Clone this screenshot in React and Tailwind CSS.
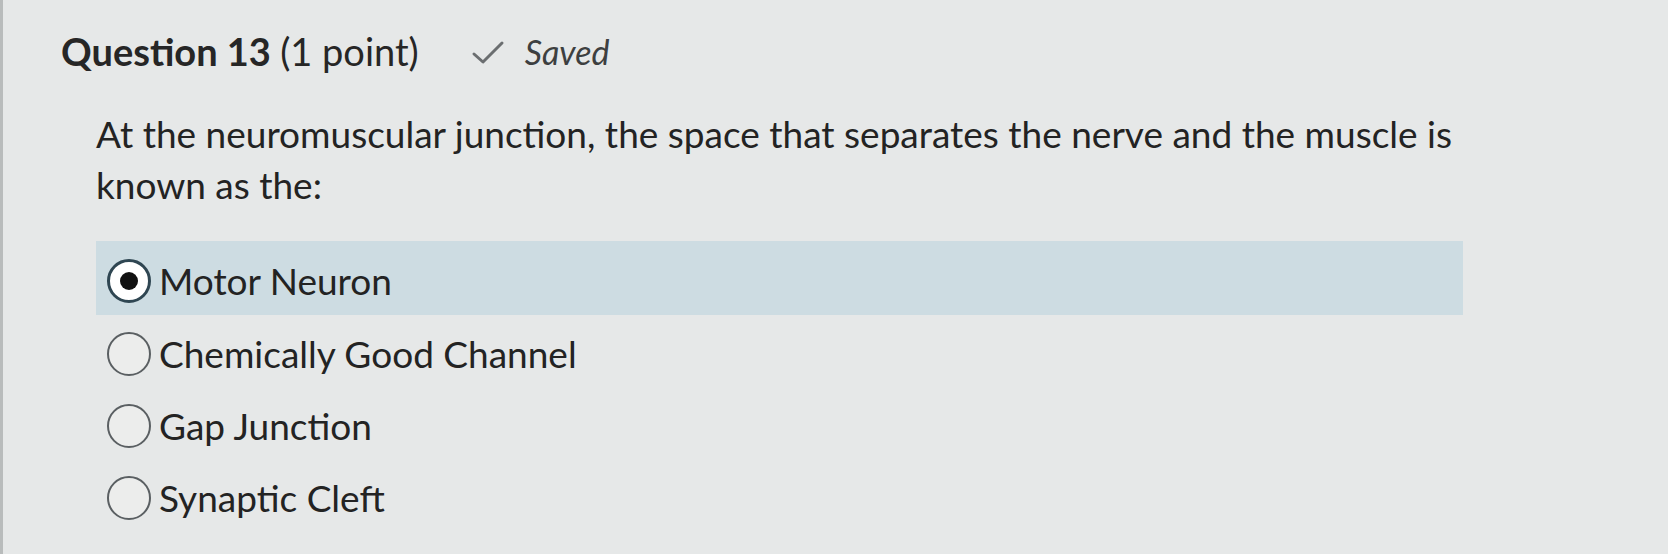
import React from "react";

const options = [
  { label: "Motor Neuron", selected: true },
  { label: "Chemically Good Channel", selected: false },
  { label: "Gap Junction", selected: false },
  { label: "Synaptic Cleft", selected: false },
];

function Radio({ selected }) {
  if (selected) {
    return (
      <span className="flex h-[44px] w-[44px] shrink-0 items-center justify-center rounded-full border-[3px] border-[#2f4652] bg-white">
        <span className="h-[18px] w-[18px] rounded-full bg-[#111]" />
      </span>
    );
  }
  return (
    <span className="h-[44px] w-[44px] shrink-0 rounded-full border-[2px] border-[#5a5f62] bg-[#ecedec]" />
  );
}

export default function App() {
  return (
    <div
      className="h-[554px] w-full overflow-hidden border-l-[3px] border-[#b9bcbc] bg-[#e6e8e8] pl-[58px] pt-[26px] text-[#222]"
      style={{ fontFamily: "Lato, 'Noto Sans', sans-serif" }}
    >
      {/* header */}
      <div className="flex items-center">
        <h2 className="text-[38px] font-bold leading-[45px] text-[#262626]">
          Question 13 <span className="font-normal">(1 point)</span>
        </h2>
        <svg className="ml-[52px] mt-[2px]" width="34" height="26" viewBox="0 0 34 26" fill="none">
          <path d="M3 14 L12 22 L31 3" stroke="#6b6e70" strokeWidth="3" strokeLinecap="round" strokeLinejoin="round" />
        </svg>
        <span className="ml-[20px] text-[34px] italic text-[#3d3f40]">Saved</span>
      </div>

      {/* question */}
      <p className="ml-[35px] mt-[31px] w-[1390px] text-[37px] leading-[51px] text-[#232323]">
        At the neuromuscular junction, the space that separates the nerve and the muscle is known as the:
      </p>

      {/* answers */}
      <div className="ml-[35px] mt-[31px] w-[1367px]">
        {options.map((opt, idx) => (
          <label
            key={idx}
            className={
              "flex items-center gap-[8px] pl-[11px] pt-[6px] " +
              (opt.selected ? "h-[74px] bg-[#cddce2]" : "h-[72px]")
            }
          >
            <Radio selected={opt.selected} />
            <span className="text-[37px] text-[#232323]">{opt.label}</span>
          </label>
        ))}
      </div>
    </div>
  );
}
